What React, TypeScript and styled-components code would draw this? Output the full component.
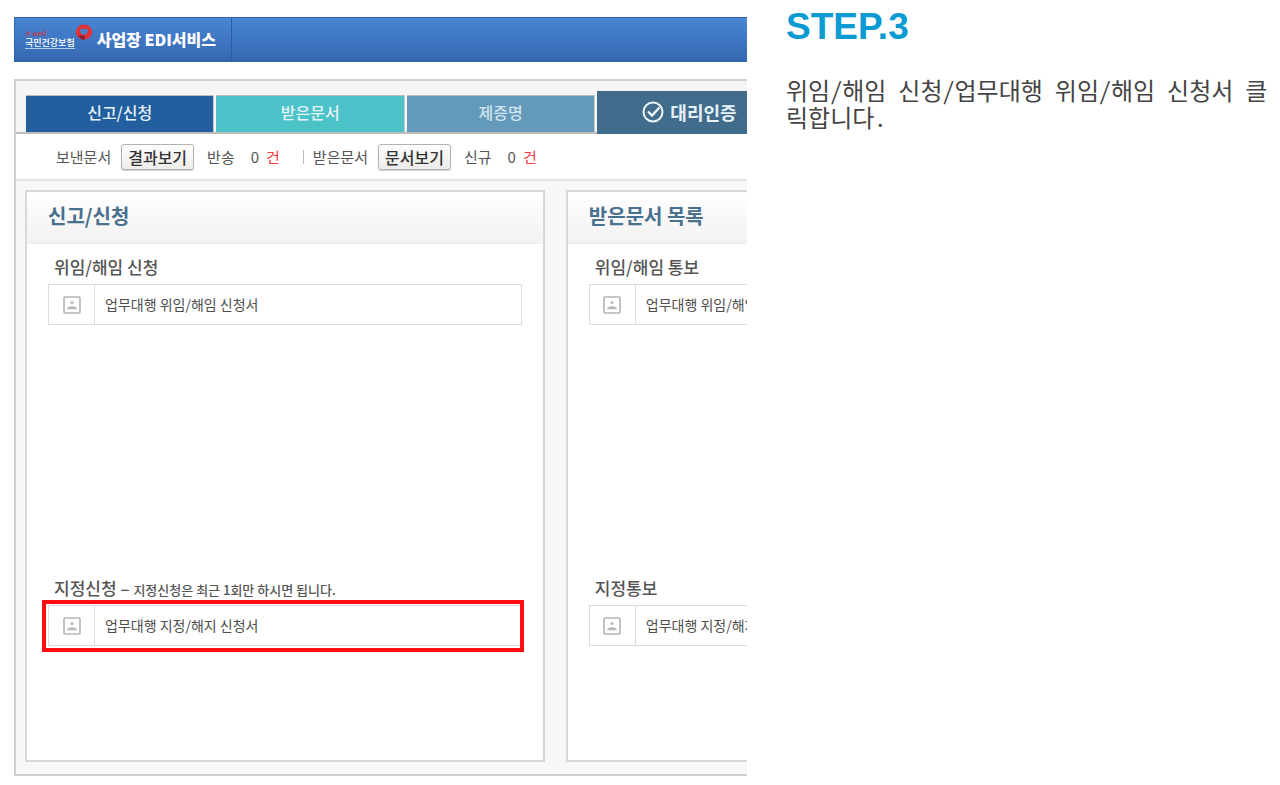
import React from "react";
import styled, { createGlobalStyle } from "styled-components";

const GlobalStyle = createGlobalStyle`
  *, *::before, *::after { box-sizing: border-box; }
  body {
    margin: 0;
    background: #fff;
    color: #555;
    font-family: "Noto Sans CJK KR", sans-serif;
  }
  h1, h2, h3, p { margin: 0; }
`;

const Page = styled.main`
  display: grid;
  grid-template-columns: minmax(0, 747fr) minmax(0, 533fr);
  align-items: start;
`;

const Preview = styled.section`
  overflow: hidden;
  padding: 17px 0 10px 14px;
`;

const ServiceBar = styled.header`
  display: flex;
  height: 45px;
  border: solid #2c62b0;
  border-width: 1px 0 1px 1px;
  background: linear-gradient(#4986d4, #3467b0);
`;

const Brand = styled.a`
  display: flex;
  align-items: center;
  gap: 4px;
  width: 217px;
  padding: 0 0 2px 10px;
  border-right: 1px solid #2b5ca3;
  color: #fff;
  text-decoration: none;
  white-space: nowrap;
`;

const Logo = styled.span`
  display: flex;
  align-items: flex-start;
  height: 30px;
`;

const LogoWords = styled.span`
  display: flex;
  flex-direction: column;
  padding-top: 6px;
  font-size: 9px;
  line-height: 11px;
  font-weight: 500;
  border-bottom: 1px solid #b9cdec;
`;

const LogoTag = styled.span`
  color: #c9344c;
  font-size: 7px;
  line-height: 7px;
  font-style: italic;
`;

const BrandName = styled.span`
  font-size: 16px;
  line-height: 24px;
  font-weight: 900;
`;

const Frame = styled.div`
  margin-top: 17px;
  border: solid #cfcfcf;
  border-width: 2px 0 2px 2px;
  background: #f7f7f7;
`;

const Tabs = styled.nav`
  display: flex;
  align-items: flex-end;
  gap: 3px;
  height: 53px;
  padding-left: 10px;
  border-bottom: 2px solid #bcbcbc;
  background: #f5f5f5;
`;

const Tab = styled.a<{ $color: string; $ink?: string }>`
  display: flex;
  align-items: center;
  justify-content: center;
  flex: 0 0 26%;
  height: 37px;
  padding-bottom: 4px;
  border-top: 1px solid #b5bcc2;
  background: ${(p) => p.$color};
  box-shadow: 1px 0 0 #c8c8c8;
  color: ${(p) => p.$ink ?? "#e6f2f8"};
  font-size: 16px;
  font-weight: 500;
  text-decoration: none;
  white-space: nowrap;
`;

const CertTab = styled(Tab)`
  flex: 1 0 auto;
  justify-content: flex-start;
  gap: 6px;
  height: 43px;
  margin-bottom: -2px;
  padding: 0 0 2px 45px;
  border-top: 0;
  font-size: 18px;
  font-weight: 700;
`;

const StatusBar = styled.div`
  display: flex;
  align-items: center;
  height: 47px;
  padding-left: 40px;
  border-bottom: 2px solid #e3e3e6;
  background: #fff;
  font-size: 15px;
  line-height: 24px;
  white-space: nowrap;
`;

const StatusButton = styled.button`
  height: 26px;
  margin: 0 13px 0 10px;
  padding: 0 6px;
  border: 1px solid #b4b4b4;
  border-radius: 3px;
  background: linear-gradient(#fdfdfd, #ececea);
  box-shadow: 0 1px 1px #ccc;
  color: #333;
  font: 500 16px/22px "Noto Sans CJK KR", sans-serif;
`;

const Count = styled.span`
  margin-left: 16px;
`;

const Unit = styled.span`
  margin-left: 7px;
  color: #ff3b3b;
`;

const Separator = styled.span`
  width: 1px;
  height: 14px;
  margin: 0 9px 0 23px;
  background: #bbb;
`;

const Panels = styled.div`
  display: grid;
  grid-template-columns: 72% 72%;
  gap: 21px;
  padding: 9px 0 12px 9px;
`;

const Panel = styled.section`
  border: 2px solid #d8d8d8;
  background: #fff;
`;

const PanelHead = styled.h2`
  height: 52px;
  padding: 9px 0 0 21px;
  border-bottom: 1px solid #ececec;
  background: linear-gradient(#fff, #f2f2f2);
  color: #48708f;
  font-size: 20px;
  line-height: 30px;
  font-weight: 700;
`;

const Groups = styled.div`
  display: grid;
  grid-template-rows: 321px 184px;
  padding: 11px 21px 0;
`;

const GroupTitle = styled.h3`
  height: 24px;
  margin-bottom: 5px;
  padding-left: 6px;
  color: #555;
  font-size: 17px;
  line-height: 24px;
  font-weight: 500;
  white-space: nowrap;
`;

const Note = styled.small`
  font-size: 13px;
  line-height: 16px;
`;

const FormLink = styled.a<{ $marked?: boolean }>`
  position: relative;
  display: flex;
  height: 41px;
  border: 1px solid #dcdcdc;
  color: #4d4d4d;
  font-size: 14px;
  line-height: 39px;
  text-decoration: none;
  white-space: nowrap;

  &::after {
    content: "";
    display: ${(p) => (p.$marked ? "block" : "none")};
    position: absolute;
    inset: -6px -3px -7px -7px;
    border: 4px solid #fc0d10;
  }
`;

const IconCell = styled.span`
  display: flex;
  align-items: center;
  justify-content: center;
  width: 46px;
  margin-right: 10px;
  border-right: 1px solid #dcdcdc;
`;

const Guide = styled.section`
  padding: 3px 8px 0 39px;
`;

const StepTitle = styled.h1`
  color: #0a9bd2;
  font: 700 37px/48px "Liberation Sans", sans-serif;
`;

const GuideText = styled.p`
  margin-top: 25px;
  color: #444;
  font: 300 24px/27px "Noto Sans Mono CJK KR", "Noto Sans CJK KR", sans-serif;
  white-space: nowrap;
`;

const PersonIcon = () => (
  <svg width="18" height="18" viewBox="0 0 18 18" fill="none" aria-hidden="true">
    <rect x="1" y="1" width="16" height="16" rx="1" stroke="#b4b4b4" strokeWidth="1.6" />
    <circle cx="9" cy="6.500" r="1.600" fill="#b9b9b9" />
    <path d="M4 13.200c0-2 2-3 5-3s5 1 5 3z" fill="#b9b9b9" />
  </svg>
);

const CheckIcon = () => (
  <svg width="22" height="22" viewBox="0 0 22 22" fill="none" stroke="#eef6fb" strokeWidth="2" aria-hidden="true">
    <circle cx="11" cy="11" r="9.500" />
    <path d="M6 10.500l4 4L17.500 6.500" strokeWidth="2.400" />
  </svg>
);

const RingMark = () => (
  <svg width="18" height="18" viewBox="0 0 18 18" aria-hidden="true">
    <ellipse cx="9" cy="8" rx="8.300" ry="7.400" fill="#e03238" />
    <path d="M9 11C6 9.500 5 8.500 5 6.800 5 4.800 7.500 4.300 9 5.500c1.500-1.200 4-.7 4 1.300C13 8.500 12 9.500 9 11z" fill="#4a7fcb" />
    <path d="M3 11.500h7v4H6z" fill="#8e1f35" />
  </svg>
);

type Group = { title: string; note?: string; form: string; marked?: boolean };

const panels: { title: string; groups: Group[] }[] = [
  {
    title: "신고/신청",
    groups: [
      { title: "위임/해임 신청", form: "업무대행 위임/해임 신청서" },
      {
        title: "지정신청",
        note: "지정신청은 최근 1회만 하시면 됩니다.",
        form: "업무대행 지정/해지 신청서",
        marked: true,
      },
    ],
  },
  {
    title: "받은문서 목록",
    groups: [
      { title: "위임/해임 통보", form: "업무대행 위임/해임" },
      { title: "지정통보", form: "업무대행 지정/해지" },
    ],
  },
];

export default function App() {
  return (
    <>
      <GlobalStyle />
      <Page>
        <Preview>
          <ServiceBar>
            <Brand href="#">
              <Logo>
                <LogoWords>
                  <LogoTag>h-well</LogoTag>
                  국민건강보험
                </LogoWords>
                <RingMark />
              </Logo>
              <BrandName>사업장 EDI서비스</BrandName>
            </Brand>
          </ServiceBar>
          <Frame>
            <Tabs>
              <Tab href="#" $color="#235e9f">신고/신청</Tab>
              <Tab href="#" $color="#4bc2c7">받은문서</Tab>
              <Tab href="#" $color="#639ab9" $ink="#cfe4f0">제증명</Tab>
              <CertTab href="#" $color="#416c8c">
                <CheckIcon />
                대리인증
              </CertTab>
            </Tabs>
            <StatusBar>
              <span>보낸문서</span>
              <StatusButton type="button">결과보기</StatusButton>
              <span>반송</span>
              <Count>0</Count>
              <Unit>건</Unit>
              <Separator />
              <span>받은문서</span>
              <StatusButton type="button">문서보기</StatusButton>
              <span>신규</span>
              <Count>0</Count>
              <Unit>건</Unit>
            </StatusBar>
            <Panels>
              {panels.map((panel) => (
                <Panel key={panel.title}>
                  <PanelHead>{panel.title}</PanelHead>
                  <Groups>
                    {panel.groups.map((group) => (
                      <div key={group.title}>
                        <GroupTitle>
                          {group.title}
                          {group.note && <> – <Note>{group.note}</Note></>}
                        </GroupTitle>
                        <FormLink href="#" $marked={group.marked}>
                          <IconCell>
                            <PersonIcon />
                          </IconCell>
                          {group.form}
                        </FormLink>
                      </div>
                    ))}
                  </Groups>
                </Panel>
              ))}
            </Panels>
          </Frame>
        </Preview>
        <Guide>
          <StepTitle>STEP.3</StepTitle>
          <GuideText>
            위임/해임 신청/업무대행 위임/해임 신청서 클
            <br />
            릭합니다.
          </GuideText>
        </Guide>
      </Page>
    </>
  );
}
